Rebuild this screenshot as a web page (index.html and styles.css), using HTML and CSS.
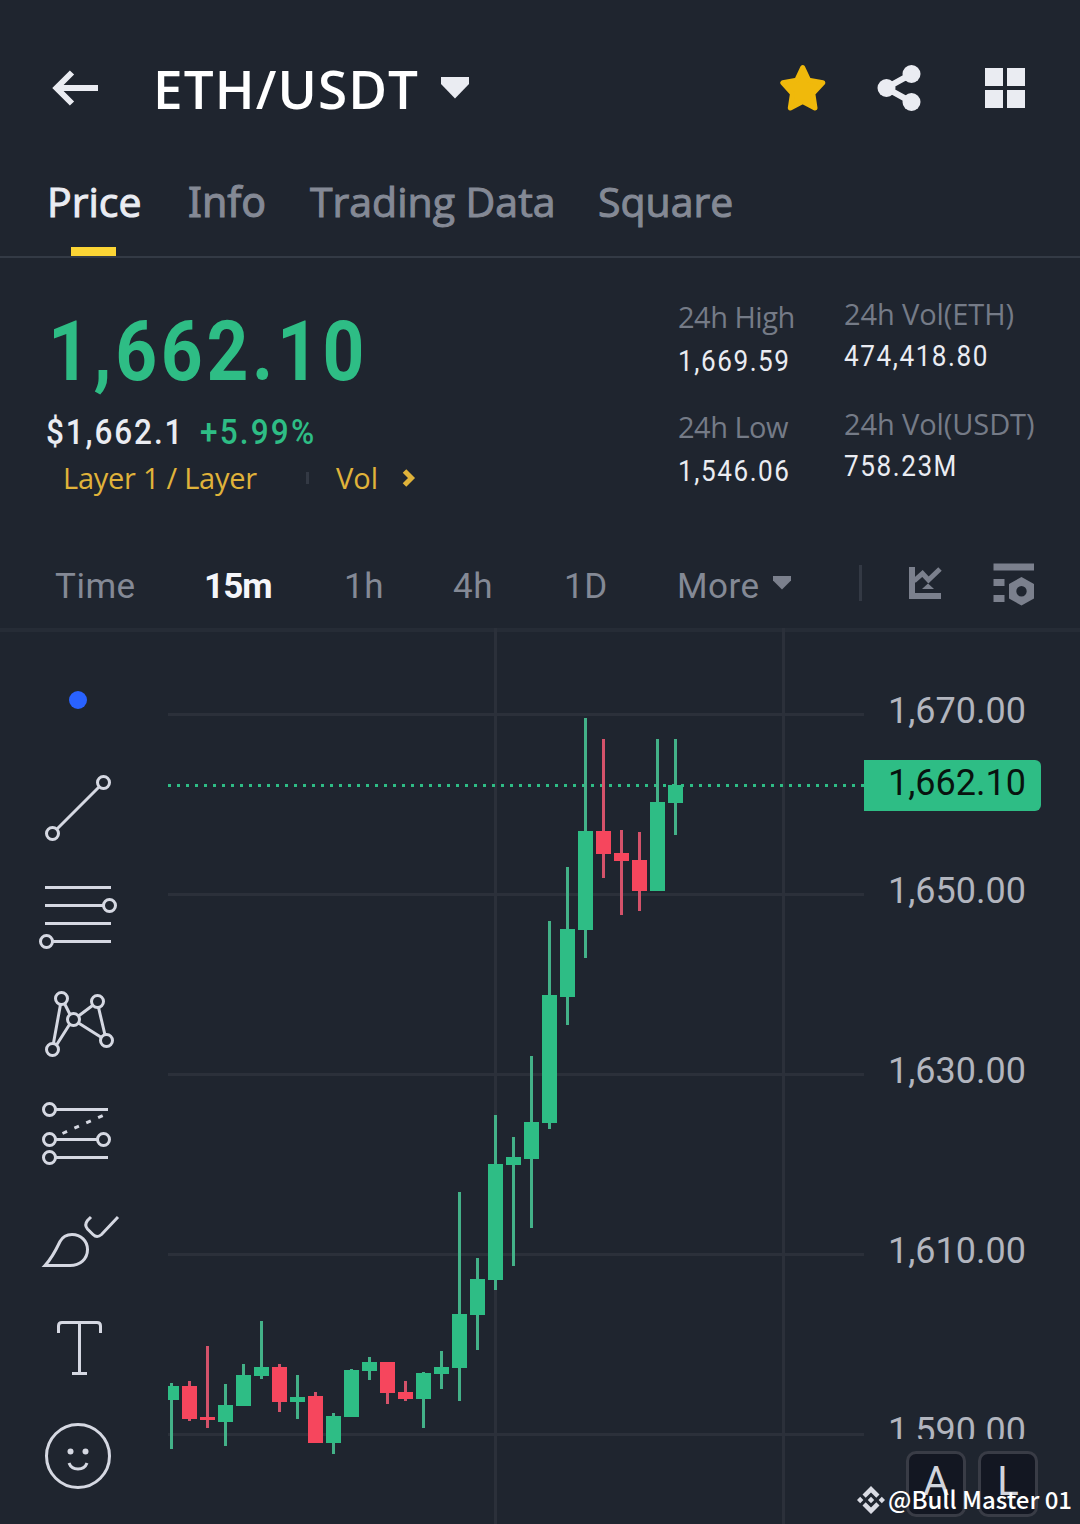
FILE: index.html
```html
<!DOCTYPE html>
<html lang="en">
<head>
  <meta charset="UTF-8" />
  <meta name="viewport" content="width=device-width, initial-scale=1.0"/>
  <title>ETH/USDT</title>
  <link rel="stylesheet" href="styles.css">
</head>
<body>
  <!-- Top bar -->
  <header class="topbar">
    <svg class="back" width="46" height="36" viewBox="52 70 46 36"><path d="M72 72.5L56.500 88L72 103.500M56 88H98"/></svg>
    <h1>ETH/USDT</h1>
    <svg class="caret" width="28" height="22" viewBox="441 78 28 22"><path d="M441 78H469V85L455 99.500L441 85Z"/></svg>
    <div class="actions">
      <svg class="star" width="46" height="48" viewBox="780 65 46 48"><path d="M802.700 68.500L808.700 81.200L822.800 83.800L812.800 94.500L815 109L802.700 102.500L790.300 109L792.500 94.500L782.800 83.800L796.700 81.200Z"/></svg>
      <svg class="share" width="44" height="46" viewBox="877 65 44 46"><path d="M911.500 74L886 88L911.500 102"/><circle cx="886.500" cy="88" r="9"/><circle cx="911.500" cy="74" r="9"/><circle cx="911.500" cy="102" r="9"/></svg>
      <svg class="grid-icon" width="40" height="40" viewBox="0 0 40 40"><path d="M0 0H18V18H0ZM22 0H40V18H22ZM0 22H18V40H0ZM22 22H40V40H22Z"/></svg>
    </div>
  </header>

  <!-- Tabs -->
  <nav class="tabs">
    <a class="tab active">Price</a>
    <a class="tab tab-info">Info</a>
    <a class="tab">Trading Data</a>
    <a class="tab">Square</a>
  </nav>

  <!-- Price summary -->
  <section class="summary">
    <div class="price-box">
      <div class="last-price"><span>1,662.10</span></div>
      <div class="sub-price">
        <span class="usd num">$1,662.1</span>
        <span class="change num">+5.99%</span>
      </div>
      <div class="tags">
        <span class="tag-layer">Layer 1 / Layer</span>
        <i class="tag-sep"></i>
        <span class="tag-vol">Vol</span>
        <svg width="14" height="20" viewBox="0 0 14 20"><path d="M2.500 3L9.500 10L2.500 17"/></svg>
      </div>
    </div>
    <dl class="stats stats-range">
      <dt>24h High</dt>
      <dd><span class="num">1,669.59</span></dd>
      <dt>24h Low</dt>
      <dd><span class="num">1,546.06</span></dd>
    </dl>
    <dl class="stats stats-vol">
      <dt>24h Vol(ETH)</dt>
      <dd><span class="num">474,418.80</span></dd>
      <dt>24h Vol(USDT)</dt>
      <dd><span class="num">758.23M</span></dd>
    </dl>
  </section>

  <!-- Intervals -->
  <nav class="intervals">
    <a>Time</a>
    <a class="active">15m</a>
    <a>1h</a>
    <a>4h</a>
    <a>1D</a>
    <a>More</a>
    <svg class="more-caret" width="18" height="88" viewBox="773 540 18 88"><path d="M773 576H791V580.500L782 589.500L773 580.500Z"/></svg>
    <i class="divider"></i>
    <svg class="tool-chart" width="34" height="88" viewBox="908 540 34 88">
      <path d="M909 567H915V593H941V599H909Z"/>
      <path class="line" d="M914 581L922.500 573.500L928.500 580L940 569"/>
      <path d="M928 583.500L934 589H922Z"/>
    </svg>
    <svg class="tool-settings" width="42" height="88" viewBox="993.500 540 42 88">
      <path d="M994 563.500H1034.500V570.500H994ZM994 579H1005V586H994ZM994 595H1005V602H994Z"/>
      <path fill-rule="evenodd" d="M1022 577L1034.500 584V598.500L1022 605.500L1009.500 598.500V584ZM1022 586A5.200 5.200 0 1 0 1022 596.400A5.200 5.200 0 1 0 1022 586Z"/>
    </svg>
  </nav>

  <main class="chart">
    <!-- Drawing tools -->
    <aside class="tools">
      <svg width="168" height="122" viewBox="0 632 168 122"><circle class="dot" cx="78" cy="700" r="9"/></svg>
      <svg width="168" height="108" viewBox="0 754 168 108">
        <path d="M57 829L99 787"/>
        <circle cx="52.500" cy="833.500" r="6"/><circle cx="103.500" cy="782.500" r="6"/>
      </svg>
      <svg width="168" height="108" viewBox="0 862 168 108">
        <path d="M45 887.500H111M45 905.500H103M45 923.500H111M53 941.500H111"/>
        <circle cx="109.500" cy="905.500" r="6"/><circle cx="46.500" cy="941.500" r="6"/>
      </svg>
      <svg width="168" height="108" viewBox="0 970 168 108">
        <path d="M60.500 1004.500L53.500 1043M64.500 1003.500L70 1014.500M56.500 1045L69.500 1024.500M78.500 1016L92.500 1005.500M98.500 1007.500L105 1035M78.500 1023L101.500 1037.500"/>
        <circle cx="61.500" cy="998.500" r="6"/><circle cx="97.500" cy="1001.500" r="6"/><circle cx="73.500" cy="1019.500" r="6"/><circle cx="52.500" cy="1049.500" r="6"/><circle cx="106.500" cy="1040.500" r="6"/>
      </svg>
      <svg width="168" height="108" viewBox="0 1078 168 108">
        <path d="M56 1109.500H108M56 1139.500H97M56 1157.500H108"/>
        <path class="dash" d="M62.500 1133.500L104 1115"/>
        <circle cx="49.500" cy="1109.500" r="6"/><circle cx="49.500" cy="1139.500" r="6"/><circle cx="103.500" cy="1139.500" r="6"/><circle cx="49.500" cy="1157.500" r="6"/>
      </svg>
      <svg width="168" height="108" viewBox="0 1186 168 108">
        <path d="M45 1265.500C52 1258 56 1250 60 1241.500C63 1236 67 1234.500 72 1234.500C81 1234.500 87.500 1241 87.500 1249.500C87.500 1259 80 1265.500 70 1265.500Z"/>
        <path d="M91 1217L87.500 1220.500Q84 1225 87.500 1229L93 1234.500Q97 1238.500 101.500 1234.500L118 1217"/>
      </svg>
      <svg width="168" height="108" viewBox="0 1294 168 108">
        <path d="M58.500 1333V1326Q58.500 1322.500 62 1322.500H97Q100.500 1322.500 100.500 1326V1333M79.500 1322.500V1373.500M72 1373.500H87"/>
      </svg>
      <svg width="168" height="122" viewBox="0 1402 168 122">
        <circle cx="78" cy="1456" r="31.500"/>
        <circle class="eye" cx="70.500" cy="1451.500" r="3"/><circle class="eye" cx="85.500" cy="1451.500" r="3"/>
        <path d="M69 1463C72 1471 84 1471 87 1463"/>
      </svg>
    </aside>

    <!-- Candles, 18px apart -->
    <svg class="candles" width="696" height="892" viewBox="168 632 696 892">
      <path class="grid" d="M168 714.500H864M168 894.500H864M168 1074.500H864M168 1254.500H864M168 1434.500H864M495.500 628V1524M783.500 628V1524"/>
      <path class="last-line" d="M168 785.500H864"/>
      <path class="up wick" d="M171.500 1383V1449M225.500 1384V1446M243.500 1364V1406M261.500 1321V1379M297.500 1375V1419M333.500 1413V1454M351.500 1369V1417M369.500 1357V1380M423.500 1372V1428M441.500 1351V1389M459.500 1192V1401M477.500 1258V1350M495.500 1115V1290M513.500 1137V1266M531.500 1056V1228M549.500 921V1129M567.500 867V1025M585.500 718V958M657.500 739V891M675.500 739V835"/>
      <path class="down wick" d="M189.500 1381V1421M207.500 1346V1428M279.500 1364V1412M315.500 1392V1443M387.500 1362V1404M405.500 1381V1401M603.500 739V878M621.500 830V915M639.500 832V911"/>
      <path class="up body" d="M225.500 1405V1422M243.500 1375V1406M261.500 1367V1376M297.500 1397V1402M333.500 1416V1443M351.500 1370V1417M369.500 1362V1371M423.500 1373V1399M441.500 1367V1374M459.500 1314V1368M477.500 1279V1315M495.500 1164V1280M513.500 1157V1165M531.500 1122V1159M549.500 995V1123M567.500 929V997M585.500 831V930M657.500 802V891M675.500 785V803"/>
      <!-- first candle is cut by the left edge -->
      <rect class="first" x="168" y="1386" width="11" height="14"/>
      <path class="down body" d="M189.500 1386V1419M207.500 1417V1420M279.500 1367V1402M315.500 1396V1443M387.500 1362V1393M405.500 1392V1399M603.500 831V854M621.500 853V861M639.500 860V891"/>
    </svg>

    <!-- Price axis -->
    <div class="axis">
      <span>1,670.00</span>
      <span>1,650.00</span>
      <span>1,630.00</span>
      <span>1,610.00</span>
      <span class="cut">1,590.00</span>
      <div class="scale-buttons">
        <button>A</button>
        <button>L</button>
      </div>
      <div class="last-tag">1,662.10</div>
    </div>
  </main>

  <div class="watermark">
    <svg width="28" height="28" viewBox="0 0 28 28"><path d="M14 0L22.500 8.500L19.300 11.700L14 6.400L8.700 11.700L5.500 8.500ZM14 28L22.500 19.500L19.300 16.300L14 21.600L8.700 16.300L5.500 19.500ZM14 10.800L17.200 14L14 17.200L10.800 14ZM3.200 10.800L6.400 14L3.200 17.200L0 14ZM24.800 10.800L28 14L24.800 17.200L21.600 14Z"/></svg>
    <span>@Bull Master 01</span>
  </div>
</body>
</html>
```
FILE: styles.css
```css
* {
  box-sizing: border-box;
}
body {
  margin: 0;
  width: 1080px;
  height: 1524px;
  position: relative;
  overflow: hidden;
  background-color: #1f252f;
  color: #eaecf2;
  font-family: 'Open Sans', 'Noto Sans', sans-serif;
  white-space: nowrap;
}
svg {
  display: block;
  flex: none;
}

/* top bar */
.topbar {
  display: flex;
  align-items: center;
  height: 177px;
  padding: 0 55px 0 52px;
}
.topbar svg {
  fill: #eaecf2;
  margin-bottom: 1px;
}
.topbar .back {
  fill: none;
  stroke: #eaecf2;
  stroke-width: 6;
}
h1 {
  margin: 0 0 0 55px;
  width: 288px;
  font-size: 53px;
  font-weight: 600;
  letter-spacing: 1.1px;
  color: #fff;
}
.actions {
  display: flex;
  align-items: center;
  margin-left: auto;
}
.topbar .star {
  fill: #f0b90b;
  stroke: #f0b90b;
  stroke-width: 5;
  stroke-linejoin: round;
  margin-right: 51px;
}
.topbar .share {
  margin-right: 64px;
}
.share path {
  fill: none;
  stroke: #eaecf2;
  stroke-width: 6;
}

/* tabs */
.tabs {
  display: grid;
  grid-template-columns: 141px 122px 288px auto;
  height: 81px;
  padding-left: 47px;
  border-bottom: 2px solid #333a45;
}
.tab {
  font-size: 41px;
  line-height: 48px;
  color: #848995;
  -webkit-text-stroke: 1px currentColor;
}
.tab-info {
  font-family: 'Noto Sans', sans-serif;
}
.tab.active {
  color: #eaecf2;
}
.tab.active::after {
  content: "";
  display: block;
  width: 45px;
  height: 9px;
  margin: 22px 0 0 24px;
  background-color: #fcd535;
}

/* price summary */
.summary {
  display: flex;
  height: 282px;
  padding-left: 46px;
}
.price-box {
  width: 632px;
  padding-top: 44px;
}
.num {
  display: block;
  font-family: Roboto, sans-serif;
  letter-spacing: 0.06em;
  transform: scaleX(0.9);
  transform-origin: 0 50%;
}
.last-price {
  height: 100px;
  padding-left: 2px;
  line-height: 100px;
  font-family: Roboto, sans-serif;
  font-size: 83px;
  font-weight: 700;
  color: #2ebd85;
}
.last-price span {
  display: inline-block;
  letter-spacing: 4.2px;
  transform: scaleX(0.88);
  transform-origin: 0 50%;
}
.sub-price {
  display: flex;
  height: 60px;
  line-height: 62px;
  font-size: 35px;
  font-weight: 500;
}
.usd {
  width: 154px;
}
.change {
  color: #2ebd85;
  letter-spacing: 0.07em;
}
.tags {
  display: flex;
  align-items: center;
  height: 32px;
  padding-left: 17px;
  font-size: 29px;
  line-height: 32px;
  color: #e0b33a;
}
.tag-layer {
  width: 243px;
  letter-spacing: -0.25px;
}
.tag-sep {
  width: 3px;
  height: 12px;
  background-color: #333944;
}
.tag-vol {
  width: 66px;
  margin-left: 27px;
}
.tags svg {
  fill: none;
  stroke: #e0b33a;
  stroke-width: 5;
}
.stats {
  margin: 37px 0 0;
  width: 166px;
  font-size: 29px;
  line-height: 44px;
}
.stats-vol {
  margin-top: 34px;
  width: 200px;
  line-height: 43px;
}
.stats dt {
  color: #757b87;
  letter-spacing: -0.5px;
}
.stats-vol dt {
  letter-spacing: -0.1px;
}
.stats dd {
  margin: 0 0 22px;
}
.stats-vol dd {
  margin-bottom: 23.5px;
}

/* intervals */
.intervals {
  display: flex;
  height: 92px;
  line-height: 93px;
  padding-left: 55px;
  border-bottom: 4px solid #262c36;
  font-family: Roboto, sans-serif;
  font-size: 35px;
  color: #848995;
}
.intervals a {
  width: 109px;
  letter-spacing: 0.5px;
}
.intervals a:nth-child(1) {
  width: 149px;
}
.intervals a:nth-child(2) {
  width: 140px;
}
.intervals a:nth-child(4) {
  width: 111px;
}
.intervals a:nth-child(5) {
  width: 113px;
}
.intervals a:nth-child(6) {
  width: 96px;
}
.intervals .active {
  color: #f5f6fa;
  font-weight: 700;
  letter-spacing: -0.9px;
}
.intervals svg {
  fill: #7b808d;
}
.divider {
  width: 3px;
  height: 36px;
  margin: 25px 0 0 68px;
  background-color: #333944;
}
.tool-chart {
  margin-left: 46px;
}
.tool-chart .line {
  fill: none;
  stroke: #7b808d;
  stroke-width: 5;
}
.tool-settings {
  margin-left: 50.5px;
}

/* chart */
.chart {
  display: flex;
  height: 892px;
}
.tools {
  width: 168px;
}
.tools svg {
  fill: none;
  stroke: #d5d8e2;
  stroke-width: 3;
}
.tools .dot {
  fill: #2962ff;
  stroke: none;
}
.tools .eye {
  fill: #d5d8e2;
  stroke: none;
}
.tools .dash {
  stroke-dasharray: 5 8;
}
.candles {
  overflow: visible;
}
.grid {
  stroke: #2b303a;
  stroke-width: 3;
}
.last-line {
  stroke: #2ebd85;
  stroke-width: 3;
  stroke-dasharray: 3 6;
}
.wick {
  stroke-width: 3;
}
.body {
  stroke-width: 15;
}
.up {
  stroke: #2ebd85;
}
.first {
  fill: #2ebd85;
}
.up.wick {
  stroke: #43b188;
}
.down {
  stroke: #f6465d;
}
.down.wick {
  stroke: #d4526a;
}
.axis {
  position: relative;
  width: 216px;
  padding: 59px 0 0 24px;
  font-family: Roboto, sans-serif;
  font-size: 36px;
  line-height: 40px;
  color: #b2b5be;
}
.axis span {
  display: block;
  height: 40px;
  margin-bottom: 140px;
}
.axis .cut {
  height: 28px;
  margin-bottom: 12px;
  overflow: hidden;
}
.scale-buttons {
  display: flex;
  gap: 12px;
  margin-left: 18px;
}
.scale-buttons button {
  width: 60px;
  height: 66px;
  padding: 0 0 5px;
  border: 3px solid #393c46;
  border-radius: 10px;
  background-color: #131722;
  color: #d1d4dc;
  font-family: Roboto, sans-serif;
  font-size: 40px;
}
.last-tag {
  position: absolute;
  left: 0;
  top: 128px;
  width: 177px;
  height: 51px;
  padding-left: 24px;
  line-height: 46px;
  border-radius: 0 6px 6px 0;
  background-color: #2ebd85;
  color: #08130f;
}

.watermark {
  position: absolute;
  right: 8px;
  bottom: 7px;
  display: flex;
  align-items: center;
  gap: 3px;
  font-family: 'Noto Sans CJK SC', sans-serif;
  font-size: 24px;
  font-weight: 500;
  line-height: 36px;
  color: #fff;
}
.watermark svg {
  margin-top: 2px;
  fill: #d9dbe3;
}
```
